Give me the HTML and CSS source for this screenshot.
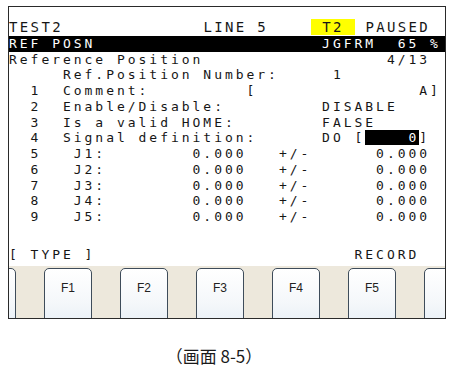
FILE: index.html
```html
<!DOCTYPE html>
<html lang="zh-CN">
<head>
    <meta charset="UTF-8">
    <meta name="viewport" content="width=device-width, initial-scale=1.0">
    <title>REF POSN</title>
    <link rel="stylesheet" href="styles.css">
</head>

<body>
    <div class="pendant">
        <div class="lines">
            <div class="row status">TEST2             LINE 5    <span class="mode"> T2 </span> PAUSED </div>
            <div class="row title">REF POSN                     JGFRM  65 %</div>
            <div class="row">Reference Position                 4/13 </div>
            <div class="row">     Ref.Position Number:     1         </div>
            <div class="row">  1  Comment:         [               A]</div>
            <div class="row">  2  Enable/Disable:         DISABLE    </div>
            <div class="row">  3  Is a valid HOME:        FALSE      </div>
            <div class="row">  4  Signal definition:      DO [<span class="cursor">    0</span>] </div>
            <div class="row">  5   J1:        0.000   +/-      0.000 </div>
            <div class="row">  6   J2:        0.000   +/-      0.000 </div>
            <div class="row">  7   J3:        0.000   +/-      0.000 </div>
            <div class="row">  8   J4:        0.000   +/-      0.000 </div>
            <div class="row">  9   J5:        0.000   +/-      0.000 </div>
        </div>
        <div class="row keys">[ TYPE ]                        RECORD  </div>
        <div class="fkeys">
            <div class="fkey"></div>
            <div class="fkey">F1</div>
            <div class="fkey">F2</div>
            <div class="fkey">F3</div>
            <div class="fkey">F4</div>
            <div class="fkey">F5</div>
            <div class="fkey"></div>
        </div>
    </div>
    <p class="caption">（画面 8-5）</p>
</body>

</html>
```

FILE: styles.css
```css
body {
    margin: 0;
    background: #fff;
    color: #000;
    font-family: 'Liberation Sans', Arial, sans-serif;
}

.pendant {
    width: 436px;
    margin: 6px 0 0 8px;
    border: 1px solid #2a2a2a;
    overflow: hidden;
}

.lines {
    padding-top: 13px;
}

/* 40 columns, 10.8px per cell */
.row {
    height: 15.75px;
    line-height: 15.75px;
    white-space: pre;
    font-family: 'DejaVu Sans Mono', monospace;
    font-size: 13px;
    letter-spacing: 2.97px;
    color: #161616;
}

.row.status {
    font-size: 14px;
    letter-spacing: 2.37px;
}

.row .mode {
    background: #ffff00;
}

.row.title {
    background: #000;
    color: #fff;
}

.row .cursor {
    background: #000;
    color: #fff;
}

.keys {
    margin-top: 22px;
}

.fkeys {
    display: flex;
    gap: 28px;
    height: 52px;
    margin-top: 3px;
    background: #ede8dc;
    overflow: hidden;
}

.fkey {
    flex: none;
    width: 48px;
    height: 60px;
    margin-top: 2px;
    padding-top: 12px;
    box-sizing: border-box;
    border: 1px solid #3e4c5a;
    border-radius: 5px;
    background: linear-gradient(#ffffff, #f4f7fa 60%, #e6eef5);
    text-align: center;
    font-size: 12px;
    color: #222;
}

.fkey:first-child {
    margin-left: -41px;
}

.caption {
    width: 428px;
    margin: 24px 0 0;
    text-align: center;
    font-family: 'Noto Sans CJK SC', sans-serif;
    font-size: 17px;
    color: #1a1a1a;
}
```
